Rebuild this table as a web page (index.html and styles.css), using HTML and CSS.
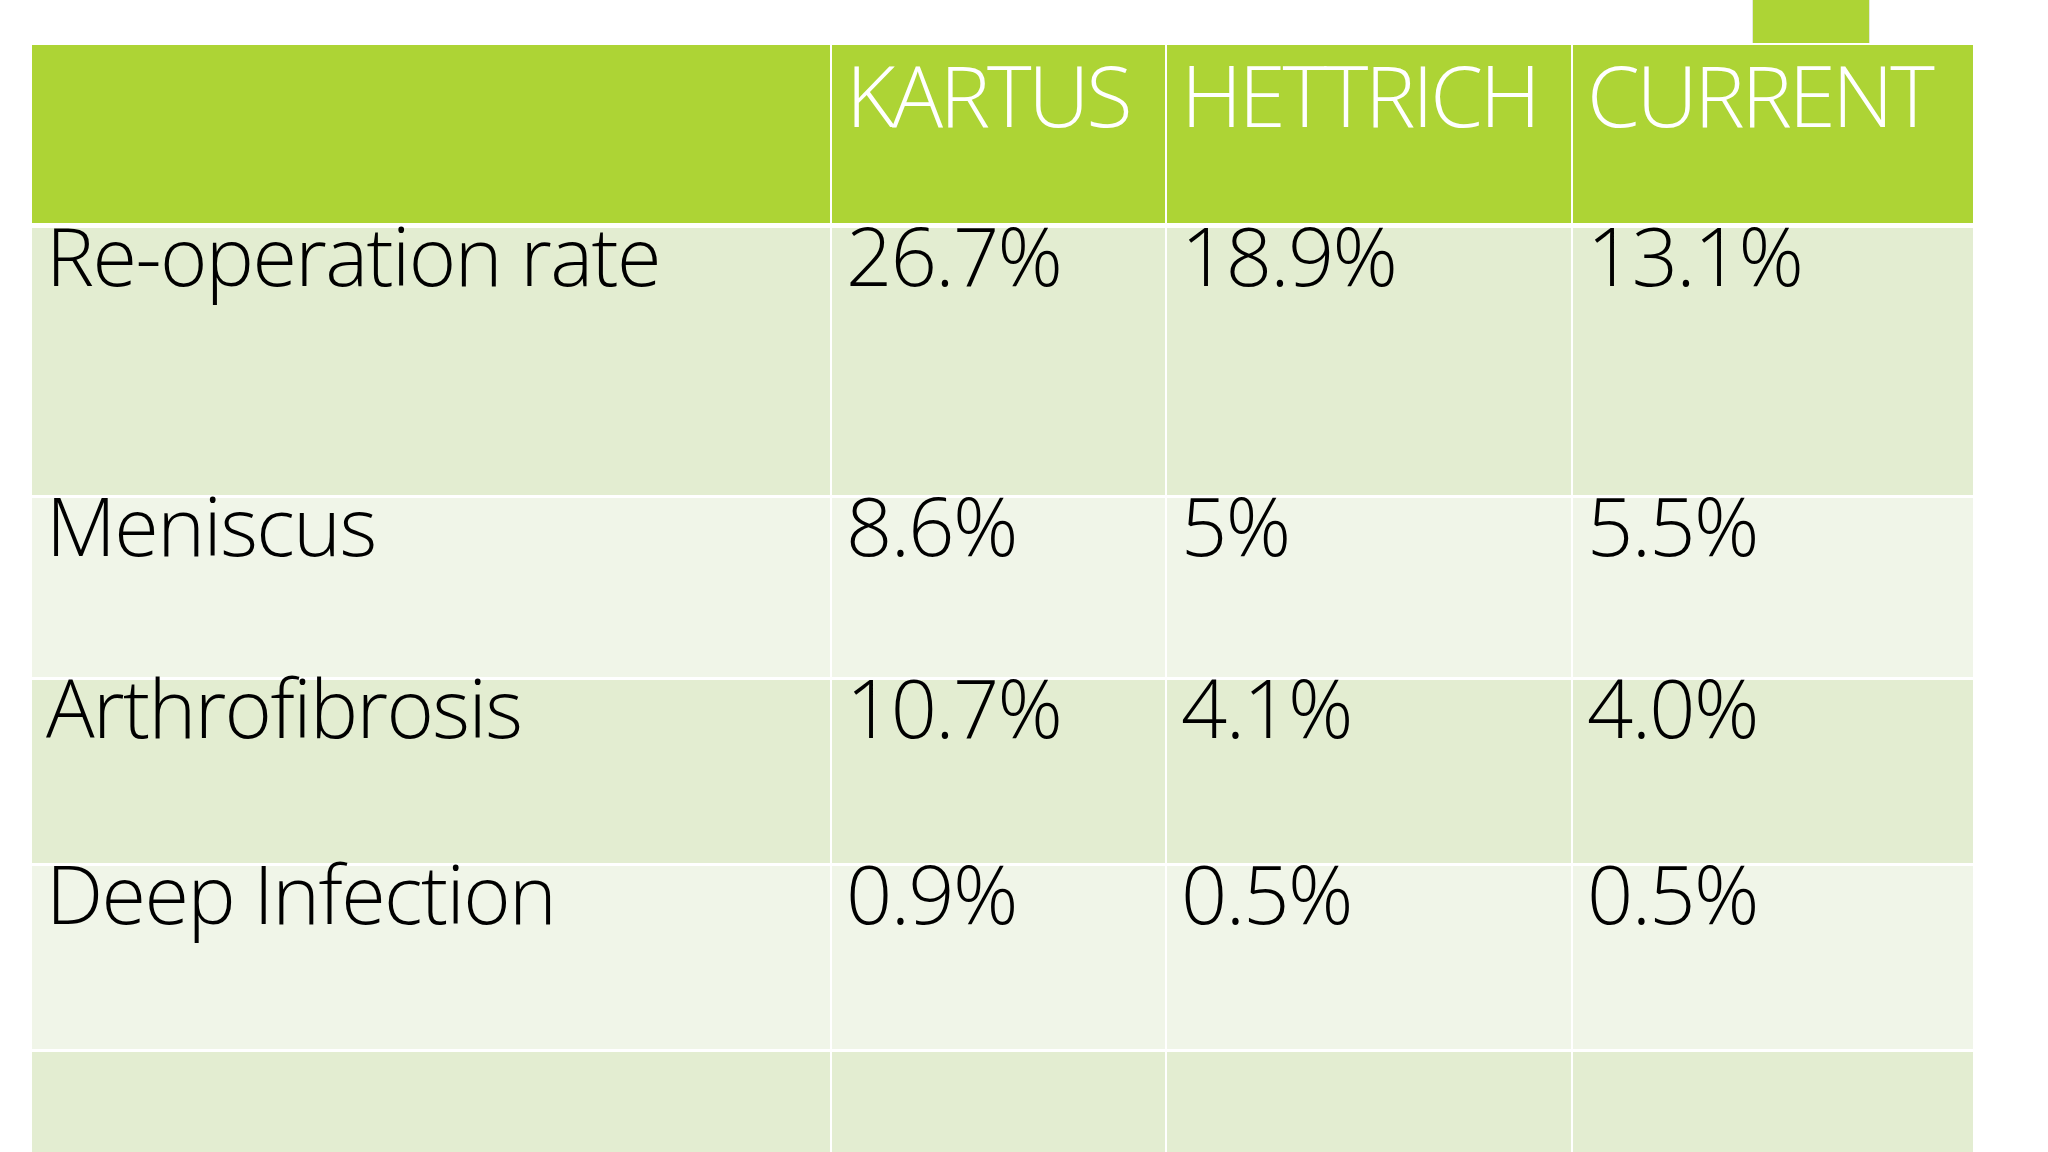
FILE: index.html
```html
<!DOCTYPE html>
<html lang="en">
<head>
<meta charset="utf-8">
<title>Complications comparison</title>
<link rel="stylesheet" href="styles.css">
</head>
<body>
<div class="slide">
  <div class="tab-mark"></div>
  <div class="table">
    <div class="row head">
      <div class="cell"></div>
      <div class="cell">KARTUS</div>
      <div class="cell">HETTRICH</div>
      <div class="cell">CURRENT</div>
    </div>
    <div class="row band-dark tall">
      <div class="cell">Re-operation rate</div>
      <div class="cell">26.7%</div>
      <div class="cell">18.9%</div>
      <div class="cell">13.1%</div>
    </div>
    <div class="row band-light r2">
      <div class="cell">Meniscus</div>
      <div class="cell">8.6%</div>
      <div class="cell">5%</div>
      <div class="cell">5.5%</div>
    </div>
    <div class="row band-dark">
      <div class="cell">Arthrofibrosis</div>
      <div class="cell">10.7%</div>
      <div class="cell">4.1%</div>
      <div class="cell">4.0%</div>
    </div>
    <div class="row band-light">
      <div class="cell">Deep Infection</div>
      <div class="cell">0.9%</div>
      <div class="cell">0.5%</div>
      <div class="cell">0.5%</div>
    </div>
    <div class="row band-dark last">
      <div class="cell"></div>
      <div class="cell"></div>
      <div class="cell"></div>
      <div class="cell"></div>
    </div>
  </div>
</div>
</body>
</html>
```
FILE: styles.css
```css
html, body {
  margin: 0;
  padding: 0;
  height: 1152px;
  overflow: hidden;
  background: #ffffff;
}

.slide {
  width: 2048px;
  height: 1152px;
  display: flex;
  flex-direction: column;
  font-family: "Open Sans", "Noto Sans", sans-serif;
  font-weight: 300;
}

.tab-mark {
  width: 116px;
  height: 43px;
  margin-left: 1753px;
  margin-bottom: 2px;
  background: #add435;
  box-shadow: -1px 0 0 #e4e8dc, 1px 0 0 #e4e8dc;
  flex: none;
}

.table {
  margin-left: 32px;
  width: 1941px;
  display: flex;
  flex-direction: column;
  gap: 3px;
  background: #ffffff;
}

.row {
  display: grid;
  grid-template-columns: 798px 333px 404px 400px;
  column-gap: 2px;
  height: 183px;
  flex: none;
}

.cell {
  padding-left: 14px;
  white-space: nowrap;
  overflow: visible;
}

.head {
  height: 178px;
  margin-bottom: 2px;
}

.head .cell {
  background: #add435;
  color: #ffffff;
  font-size: 85px;
  line-height: 98px;
  letter-spacing: -3.3px;
}

.band-dark .cell,
.band-light .cell {
  color: #000000;
  font-size: 81px;
  line-height: 53px;
  letter-spacing: -1.6px;
}

.band-dark .cell {
  background: #e3edd1;
}

.band-light .cell {
  background: #f0f5e8;
}

.tall {
  height: 267px;
}

.r2 {
  height: 179px;
}

.last {
  height: 100px;
}
```
